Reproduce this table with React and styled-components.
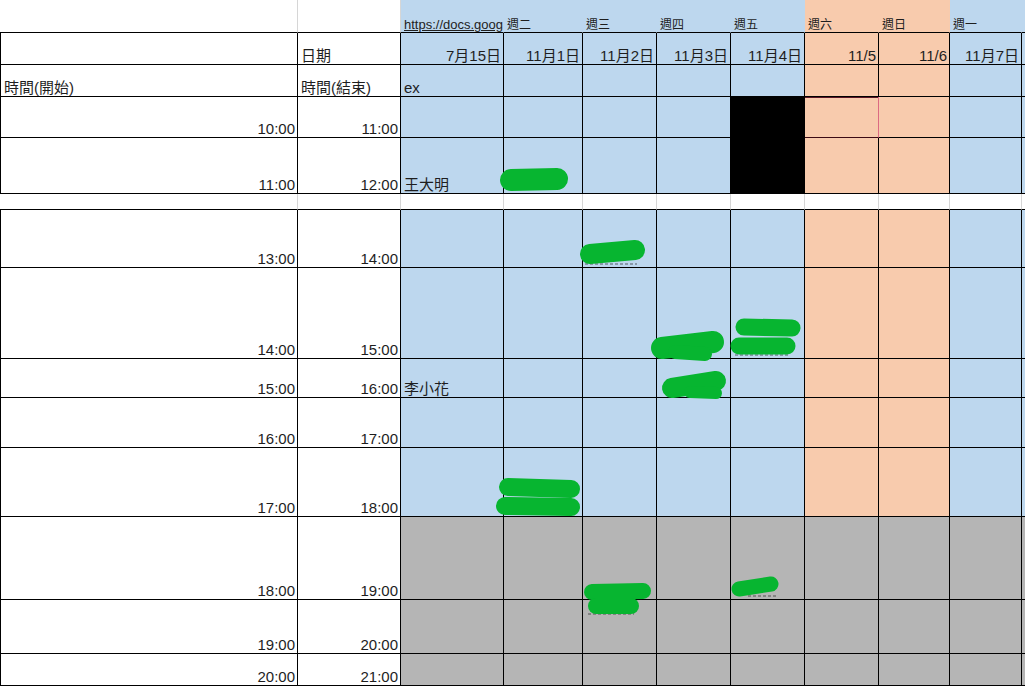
import React from "react";
import styled, { createGlobalStyle } from "styled-components";

const GlobalStyle = createGlobalStyle`
  html, body {
    margin: 0;
    padding: 0;
    background: #fff;
  }
  body {
    font-family: "Liberation Sans", "Noto Sans CJK TC", sans-serif;
    color: #1e1e1e;
  }
`;

const FILL = {
  white: "#ffffff",
  blue: "#bdd7ee",
  orange: "#f8cbad",
  gray: "#b5b5b5",
  black: "#000000",
};

const GRID = "#d6d6d6";

const COLS = "298px 103px 103px 79px 74px 74px 74px 74px 71px 72px 1fr";

const Sheet = styled.div`
  position: relative;
  width: 1025px;
  height: 686px;
  overflow: hidden;
  display: grid;
  grid-template-columns: ${COLS};
  grid-template-rows: ${(props) => props.$rows};
`;

const Cell = styled.div`
  box-sizing: border-box;
  display: flex;
  align-items: flex-end;
  justify-content: ${(props) => (props.$align === "right" ? "flex-end" : "flex-start")};
  padding: 0 2px 0 3px;
  min-width: 0;
  overflow: hidden;
  white-space: nowrap;
  background: ${(props) => FILL[props.$fill]};
  border-left: ${(props) => (props.$edge ? "1px solid #000" : "none")};
  border-right: 1px solid ${(props) => props.$line};
  border-bottom: 1px solid ${(props) => (props.$mark ? "#3d0a14" : "#000")};
  box-shadow: ${(props) => (props.$mark ? "inset 0 1px 0 #5a1626" : "none")};
  font-size: ${(props) => (props.$small ? "12px" : "15px")};
  line-height: ${(props) => (props.$small ? "14px" : "17px")};
`;

const Link = styled.span`
  font-size: 13px;
  text-decoration: underline;
  color: #222;
`;

const Overlay = styled.svg`
  position: absolute;
  left: 0;
  top: 0;
  pointer-events: none;
`;

const WEEK = ["週二", "週三", "週四", "週五", "週六", "週日", "週一", ""];
const DATES = ["11月1日", "11月2日", "11月3日", "11月4日", "11/5", "11/6", "11月7日", ""];

const ROWS = [
  { h: 33, kind: "head" },
  { h: 32, kind: "date", b: "日期", c: "7月15日" },
  { h: 32, kind: "label", a: "時間(開始)", b: "時間(結束)", c: "ex" },
  { h: 41, a: "10:00", b: "11:00", blackG: true, mark: true },
  { h: 56, a: "11:00", b: "12:00", c: "王大明", blackG: true },
  { h: 16, kind: "gap" },
  { h: 58, a: "13:00", b: "14:00" },
  { h: 91, a: "14:00", b: "15:00" },
  { h: 39, a: "15:00", b: "16:00", c: "李小花" },
  { h: 50, a: "16:00", b: "17:00" },
  { h: 69, a: "17:00", b: "18:00" },
  { h: 83, a: "18:00", b: "19:00", night: true },
  { h: 54, a: "19:00", b: "20:00", night: true },
  { h: 32, a: "20:00", b: "21:00", night: true },
];

const dayFill = (row, col) => {
  if (row.kind === "gap") return "white";
  if (row.night) return "gray";
  if (row.blackG && col === 6) return "black";
  if (col === 7 || col === 8) return "orange";
  return "blue";
};

const SheetRow = ({ row, index }) => {
  const head = row.kind === "head";
  const gap = row.kind === "gap";
  const cells = [];

  cells.push(
    <Cell
      key="a"
      $fill="white"
      $edge={!head && !gap}
      $line={head || gap ? GRID : "#000"}
      $align={row.kind === "label" ? "left" : "right"}
    >
      {row.a}
    </Cell>
  );
  cells.push(
    <Cell
      key="b"
      $fill="white"
      $line={head || gap ? GRID : "#000"}
      $align={row.kind === "label" || row.kind === "date" ? "left" : "right"}
    >
      {row.b}
    </Cell>
  );

  for (let col = 2; col <= 10; col++) {
    const fill = dayFill(row, col);
    let content = null;
    let align = "left";
    if (head) {
      content = col === 2 ? <Link>https://docs.goog</Link> : WEEK[col - 3];
    } else if (row.kind === "date") {
      content = col === 2 ? row.c : DATES[col - 3];
      align = "right";
    } else if (col === 2) {
      content = row.c;
    }
    cells.push(
      <Cell
        key={col}
        $fill={fill}
        $small={head}
        $align={align}
        $line={head ? FILL[fill] : gap ? GRID : row.mark && col === 7 ? "#dc6a82" : "#000"}
        $mark={row.mark && col === 7}
      >
        {content}
      </Cell>
    );
  }

  return <React.Fragment key={index}>{cells}</React.Fragment>;
};

const Redactions = () => (
  <Overlay width="1025" height="686" viewBox="0 0 1025 686">
    <g stroke="#2a2a2a" strokeWidth="1.2" strokeDasharray="3 2" opacity="0.7">
      <line x1="585" y1="264" x2="637" y2="264" />
      <line x1="735" y1="355" x2="788" y2="355" />
      <line x1="588" y1="614" x2="634" y2="614" />
      <line x1="748" y1="596" x2="776" y2="596" />
    </g>
    <g stroke="#07b530" strokeLinecap="round" fill="none">
      <path d="M511 180 L557 179" strokeWidth="22" />
      <path d="M590 254 L635 250" strokeWidth="20" />
      <path d="M662 348 L713 342" strokeWidth="22" />
      <path d="M675 352 L705 354" strokeWidth="14" />
      <path d="M744 327 L792 328" strokeWidth="17" />
      <path d="M739 346 L787 346" strokeWidth="17" />
      <path d="M672 388 L716 381" strokeWidth="20" />
      <path d="M690 392 L716 393" strokeWidth="12" />
      <path d="M508 487 L571 489" strokeWidth="18" />
      <path d="M505 506 L571 507" strokeWidth="18" />
      <path d="M592 592 L643 591" strokeWidth="16" />
      <path d="M596 606 L631 606" strokeWidth="16" />
      <path d="M739 589 L771 584" strokeWidth="15" />
    </g>
  </Overlay>
);

export default function App() {
  const rowTemplate = ROWS.map((r) => `${r.h}px`).join(" ");
  return (
    <>
      <GlobalStyle />
      <Sheet $rows={rowTemplate}>
        {ROWS.map((row, i) => (
          <SheetRow key={i} row={row} index={i} />
        ))}
        <Redactions />
      </Sheet>
    </>
  );
}
